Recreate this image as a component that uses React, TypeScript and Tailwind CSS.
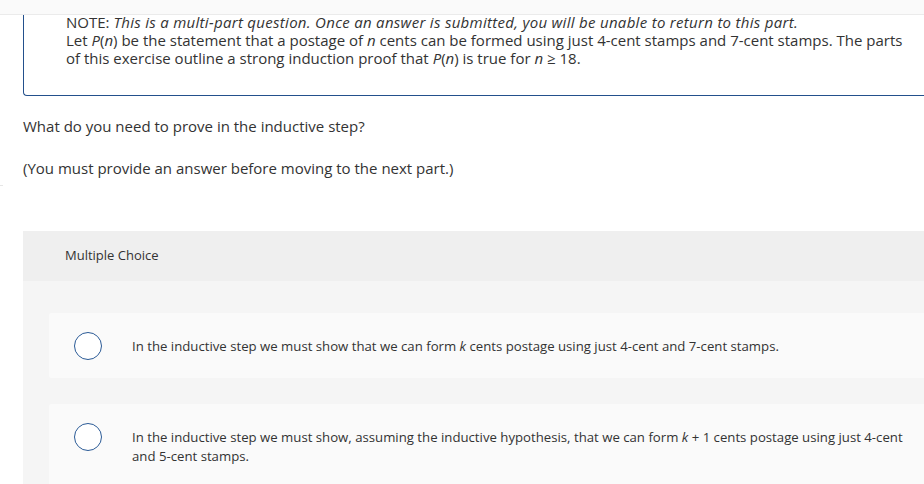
export default function App() {
  return (
    <div className="relative h-[484px] w-[924px] overflow-hidden bg-white font-['Open_Sans',sans-serif] text-[#333]">
      {/* sticky header strip */}
      <div className="absolute left-0 right-0 top-0 h-[15px] border-b border-[#ebebeb] bg-[#fafafa]" />

      <div className="ml-[23px] h-[96px] rounded-bl-[4px] border-b border-l border-[#23508c] pl-[42px] pr-[16px] pt-[13px] text-[15px] leading-[18px]">
        <p>
          NOTE:{" "}
          <i className="tracking-[0.3px]">
            This is a multi-part question. Once an answer is submitted, you will be unable to return to this part.
          </i>
        </p>
        <p>
          Let <i>P</i>(<i>n</i>) be the statement that a postage of <i>n</i> cents can be formed using just 4-cent stamps and
          7-cent stamps. The parts of this exercise outline a strong induction proof that <i>P</i>(<i>n</i>) is true for{" "}
          <i>n</i> ≥ 18.
        </p>
      </div>

      <p className="ml-[23px] mt-[21px] text-[15px] leading-[18px]">What do you need to prove in the inductive step?</p>
      <p className="ml-[23px] mt-[24px] text-[15px] leading-[18px]">(You must provide an answer before moving to the next part.)</p>

      <div className="mt-[8px] h-px w-[3px] bg-[#e6e6e6]" />

      <section className="ml-[23px] mt-[45px]">
        <div className="flex h-[50px] items-center bg-[#efefef] pl-[42px] text-[13px]">Multiple Choice</div>
        <div className="flex flex-col gap-[26px] bg-[#f5f5f5] pb-[20px] pl-[26px] pt-[32px]">
          <Option>
            In the inductive step we must show that we can form <i>k</i> cents postage using just 4-cent and 7-cent stamps.
          </Option>
          <Option>
            In the inductive step we must show, assuming the inductive hypothesis, that we can form <i>k</i> + 1 cents
            postage using just 4-cent and 5-cent stamps.
          </Option>
        </div>
      </section>
    </div>
  );
}

function Option({ children }: { children: React.ReactNode }) {
  return (
    <div className="flex items-start rounded-l-[2px] bg-[#fafafa] pb-[22px] pl-[25px] pr-[20px] pt-[24px]">
      <span className="-mb-[4px] -mt-[5px] h-[28px] w-[28px] shrink-0 rounded-full border-[1.5px] border-[#2a5a96] bg-white" />
      <p className="ml-[30px] text-[13.2px] leading-[19px]">{children}</p>
    </div>
  );
}
